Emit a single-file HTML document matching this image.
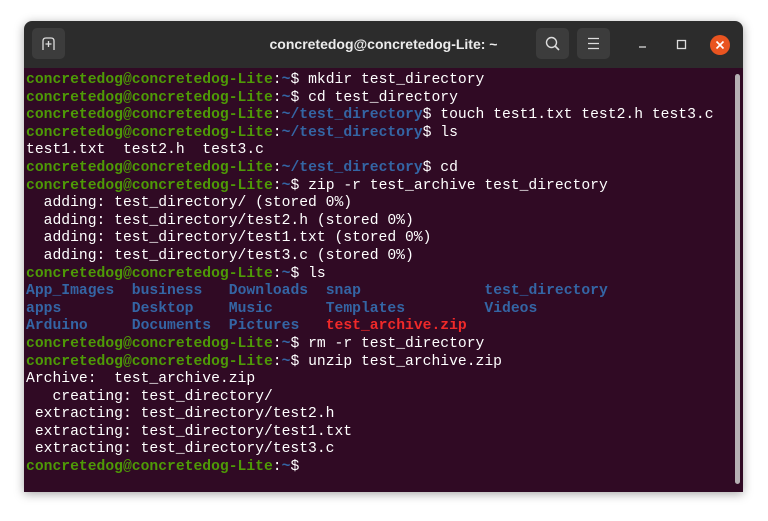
<!DOCTYPE html>
<html><head><style>
body{margin:0;width:768px;height:521px;background:#fff;position:relative;overflow:hidden;font-family:"Liberation Sans",sans-serif}
.win{position:absolute;left:24px;top:21px;width:719px;height:471px;border-radius:8px 8px 0 0;overflow:hidden;box-shadow:0 2px 10px rgba(0,0,0,.35)}
.tb{position:absolute;left:0;top:0;width:100%;height:47px;background:#2c2c2c}
.term{position:absolute;left:0;top:47px;width:100%;height:424px;background:#300a24}
pre{margin:0;position:absolute;left:2px;top:4px;font-family:"Liberation Mono",monospace;font-size:14.7px;line-height:17.6px;color:#fff}
.g{color:#4e9a06;font-weight:bold}.b{color:#3465a4;font-weight:bold}.r{color:#ef2929;font-weight:bold}
.btn{position:absolute;top:7px;width:33px;height:31px;background:#3c3c3c;border-radius:5px}
.title{position:absolute;top:0;left:0;width:100%;text-align:center;line-height:47px;color:#ececec;font-weight:bold;font-size:14px}
.sb{position:absolute;right:3px;top:6px;width:5px;height:410px;background:#b5b0b3;border-radius:3px}
</style></head><body>
<div class="win">
<div class="tb">
<div class="btn" style="left:8px"><svg width="33" height="31"><path d="M11 22V13q0-3 3-3h5q3 0 3 3v9" stroke="#ddd" stroke-width="1.3" fill="none"/><path d="M16.5 13v6M13.5 16h6" stroke="#ddd" stroke-width="1.3"/></svg></div>
<div class="title">concretedog@concretedog-Lite: ~</div>
<div class="btn" style="left:512px"><svg width="33" height="31"><circle cx="15.5" cy="14.5" r="5" stroke="#ddd" stroke-width="1.4" fill="none"/><path d="M19 18l4 4" stroke="#ddd" stroke-width="1.6"/></svg></div>
<div class="btn" style="left:553px"><svg width="33" height="31"><path d="M11 10.5h11M11 15.5h11M11 20.5h11" stroke="#ddd" stroke-width="1.3"/></svg></div>
<svg style="position:absolute;left:610px;top:14px" width="20" height="20"><path d="M5 12h7" stroke="#ddd" stroke-width="1.3"/></svg>
<svg style="position:absolute;left:648px;top:14px" width="20" height="20"><rect x="5.5" y="5.5" width="8" height="8" stroke="#ddd" stroke-width="1.3" fill="none"/></svg>
<svg style="position:absolute;left:685px;top:13px" width="22" height="22"><circle cx="11" cy="11" r="10" fill="#e95420"/><path d="M7.5 7.5l7 7M14.5 7.5l-7 7" stroke="#fff" stroke-width="1.6"/></svg>
</div>
<div class="term"><div class="sb"></div>
<pre><span class="g">concretedog@concretedog-Lite</span>:<span class="b">~</span>$ mkdir test_directory
<span class="g">concretedog@concretedog-Lite</span>:<span class="b">~</span>$ cd test_directory
<span class="g">concretedog@concretedog-Lite</span>:<span class="b">~/test_directory</span>$ touch test1.txt test2.h test3.c
<span class="g">concretedog@concretedog-Lite</span>:<span class="b">~/test_directory</span>$ ls
test1.txt  test2.h  test3.c
<span class="g">concretedog@concretedog-Lite</span>:<span class="b">~/test_directory</span>$ cd
<span class="g">concretedog@concretedog-Lite</span>:<span class="b">~</span>$ zip -r test_archive test_directory
  adding: test_directory/ (stored 0%)
  adding: test_directory/test2.h (stored 0%)
  adding: test_directory/test1.txt (stored 0%)
  adding: test_directory/test3.c (stored 0%)
<span class="g">concretedog@concretedog-Lite</span>:<span class="b">~</span>$ ls
<span class="b">App_Images</span>  <span class="b">business</span>   <span class="b">Downloads</span>  <span class="b">snap</span>              <span class="b">test_directory</span>
<span class="b">apps</span>        <span class="b">Desktop</span>    <span class="b">Music</span>      <span class="b">Templates</span>         <span class="b">Videos</span>
<span class="b">Arduino</span>     <span class="b">Documents</span>  <span class="b">Pictures</span>   <span class="r">test_archive.zip</span>
<span class="g">concretedog@concretedog-Lite</span>:<span class="b">~</span>$ rm -r test_directory
<span class="g">concretedog@concretedog-Lite</span>:<span class="b">~</span>$ unzip test_archive.zip
Archive:  test_archive.zip
   creating: test_directory/
 extracting: test_directory/test2.h
 extracting: test_directory/test1.txt
 extracting: test_directory/test3.c
<span class="g">concretedog@concretedog-Lite</span>:<span class="b">~</span>$</pre>
</div></div>
</body></html>
